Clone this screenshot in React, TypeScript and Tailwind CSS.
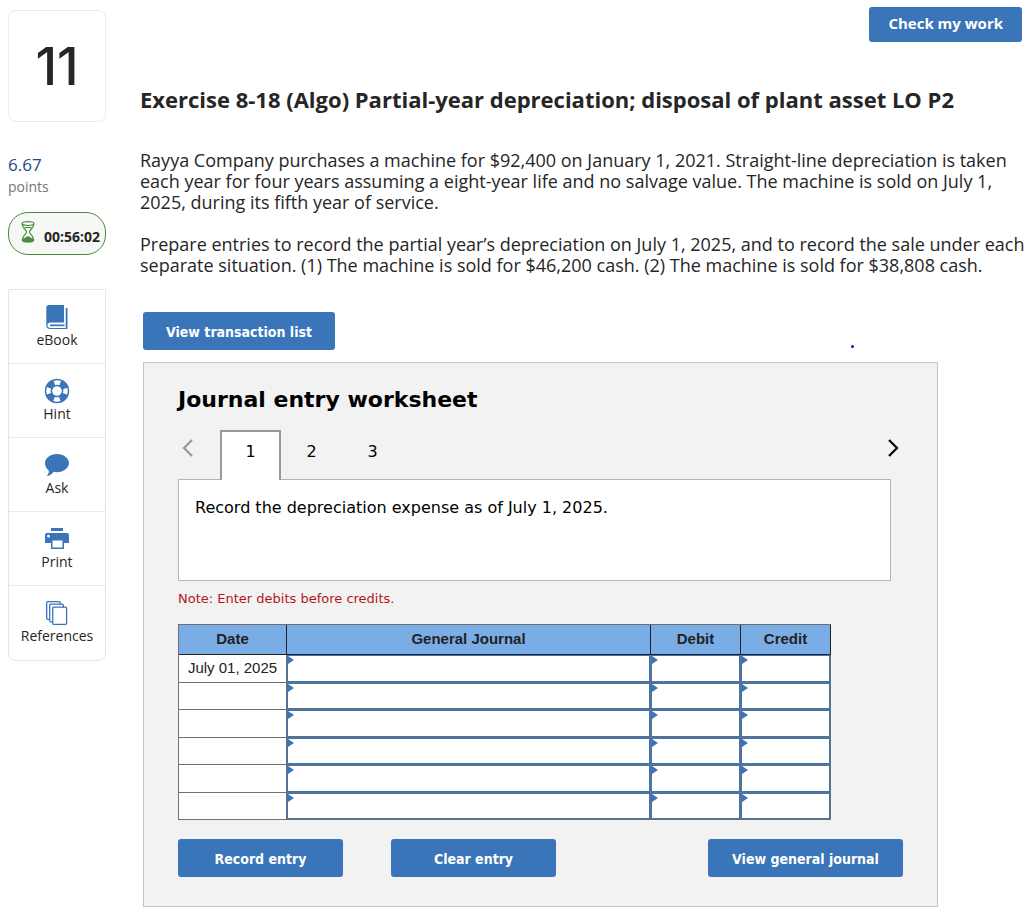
import { useState, type ReactNode } from 'react'

const TABS = ['1', '2', '3']

const ROWS = ['July 01, 2025', '', '', '', '', '']

const ENTRY_COLUMNS = ['General Journal', 'Debit', 'Credit']

const TOOLS: { label: string; icon: ReactNode }[] = [
  { label: 'eBook', icon: <BookIcon /> },
  { label: 'Hint', icon: <LifebuoyIcon /> },
  { label: 'Ask', icon: <SpeechIcon /> },
  { label: 'Print', icon: <PrinterIcon /> },
  { label: 'References', icon: <PagesIcon /> },
]

export default function App() {
  return (
    <div className="flex min-h-screen items-start gap-[34px] overflow-x-hidden bg-white pl-2 font-['Open_Sans',sans-serif] text-[#262626]">
      <Sidebar />
      <main className="min-w-0 flex-1 pt-[7px]">
        <div className="flex justify-end pr-[2px]">
          <button
            type="button"
            className="h-[35px] rounded-[3px] bg-[#3a75ba] px-[19px] pb-[2px] text-[15px] font-bold text-white"
          >
            Check my work
          </button>
        </div>

        <h1 className="mt-[42px] text-[22px] leading-[30px] font-bold whitespace-nowrap">
          Exercise 8-18 (Algo) Partial-year depreciation; disposal of plant asset LO P2
        </h1>

        <div className="mt-9 space-y-[21px] text-[18px] leading-[21px] whitespace-nowrap">
          <p>
            Rayya Company purchases a machine for $92,400 on January 1, 2021. Straight-line depreciation is taken
            <br />
            each year for four years assuming a eight-year life and no salvage value. The machine is sold on July 1,
            <br />
            2025, during its fifth year of service.
          </p>
          <p>
            Prepare entries to record the partial year’s depreciation on July 1, 2025, and to record the sale under each
            <br />
            separate situation. (1) The machine is sold for $46,200 cash. (2) The machine is sold for $38,808 cash.
          </p>
        </div>

        <div className="mt-9 ml-[3px] max-w-[795px] font-['DejaVu_Sans',Verdana,sans-serif] text-black">
          <div className="flex items-end justify-between pr-[84px]">
            <ActionButton className="w-[192px]">View transaction list</ActionButton>
            <span className="mb-[2px] size-[3px] rounded-full bg-[#3c00c8]" />
          </div>
          <Worksheet />
        </div>
      </main>
    </div>
  )
}

function Sidebar() {
  return (
    <aside className="w-[98px] shrink-0 pt-[10px]">
      <div className="flex h-28 items-center justify-center rounded-lg border border-[#ebebeb] pt-[2px] font-[Inter] text-[52px] leading-none font-medium">
        11
      </div>

      <div className="mt-8 text-[17px] leading-[22px] text-[#1c4a85]">6.67</div>
      <div className="text-[14px] leading-[22px] text-[#757575]">points</div>

      <div className="mt-[14px] flex h-[43px] items-center justify-between rounded-[20px] border border-[#4b8b3b] bg-[#f6f8f6] pr-[5px] pl-3">
        <HourglassIcon />
        <span className="pt-[6px] text-[14px] leading-5 font-bold">00:56:02</span>
      </div>

      <nav className="mt-[34px] divide-y divide-[#ebebeb] rounded-b-lg border border-[#e6e6e6]">
        {TOOLS.map((tool) => (
          <a key={tool.label} href="#" className="flex h-[74px] flex-col items-center pt-[14px]">
            {tool.icon}
            <span className="text-[14px] leading-5">{tool.label}</span>
          </a>
        ))}
      </nav>
    </aside>
  )
}

function Worksheet() {
  const [tab, setTab] = useState('1')

  return (
    <section className="mt-3 border border-[#c3c3c3] bg-[#f2f2f2] px-[34px] pt-[22px] pb-[29px]">
      <h2 className="text-[22px] leading-[30px] font-bold">Journal entry worksheet</h2>

      <div className="mt-[15px] flex items-start">
        <button type="button" aria-label="Previous entry" className="w-[42px] pt-[9px] pl-1 text-[#999]">
          <Chevron d="M10 1 2 9l8 8" />
        </button>
        {TABS.map((t) => (
          <button
            key={t}
            type="button"
            onClick={() => setTab(t)}
            className={
              t === tab
                ? 'relative -mb-px h-[50px] w-[61px] border-2 border-b-0 border-[#999] bg-white pb-2 text-[16px]'
                : 'h-[49px] w-[61px] pb-[6px] text-[16px]'
            }
          >
            {t}
          </button>
        ))}
        <button type="button" aria-label="Next entry" className="ml-auto w-[38px] pt-[9px] pl-[22px] text-black">
          <Chevron d="m2 1 8 8-8 8" />
        </button>
      </div>
      <div className="mr-[12px] h-[102px] border border-[#b5b5b5] bg-white p-4 text-[16px] leading-6">
        Record the depreciation expense as of July 1, 2025.
      </div>

      <p className="mt-2 text-[13px] leading-5 text-[#b3171d]">Note: Enter debits before credits.</p>

      <JournalTable />

      <div className="mt-[19px] flex gap-12">
        <ActionButton className="w-[165px]">Record entry</ActionButton>
        <ActionButton className="w-[165px]">Clear entry</ActionButton>
        <ActionButton className="ml-auto w-[195px]">View general journal</ActionButton>
      </div>
    </section>
  )
}

function JournalTable() {
  return (
    <table className="mt-[15px] w-[653px] table-fixed border-separate border-spacing-0 border-t border-l border-[#707070] font-['Liberation_Sans',Arial,sans-serif] text-[15px] text-[#222]">
      <colgroup>
        <col className="w-[108px]" />
        <col />
        <col className="w-[90px]" />
        <col className="w-[90px]" />
      </colgroup>
      <thead>
        <tr className="h-[30px] bg-[#7aade6]">
          {['Date', ...ENTRY_COLUMNS].map((name) => (
            <th key={name} className="border-r border-b border-[#222] p-0 font-bold">
              {name}
            </th>
          ))}
        </tr>
      </thead>
      <tbody>
        {ROWS.map((date, row) => (
          <tr key={row} className="odd:h-7 even:h-[27px]">
            <td className="border-r border-b border-[#707070] bg-white p-0 text-center">{date}</td>
            {ENTRY_COLUMNS.map((name) => (
              <EntryCell key={name} label={`${name}, row ${row + 1}`} />
            ))}
          </tr>
        ))}
      </tbody>
    </table>
  )
}

function EntryCell({ label }: { label: string }) {
  return (
    <td className="relative h-px border-r border-b border-[#707070] bg-white p-0">
      <input
        type="text"
        aria-label={label}
        className="block h-full w-full border border-[#3a75ba] bg-white px-2 outline-none"
      />
      <svg viewBox="0 0 6 8" className="pointer-events-none absolute top-[1px] left-[1px] h-2 w-[6px] fill-[#3a75ba]">
        <path d="M0 0 6 4 0 8z" />
      </svg>
    </td>
  )
}

function ActionButton({ className, children }: { className: string; children: ReactNode }) {
  return (
    <button
      type="button"
      className={`h-[38px] rounded-[3px] bg-[#3a75ba] pt-[2px] font-['DejaVu_Sans_Condensed','DejaVu_Sans',sans-serif] text-[14px] font-bold text-white ${className}`}
    >
      {children}
    </button>
  )
}

function Chevron({ d }: { d: string }) {
  return (
    <svg viewBox="0 0 12 18" className="h-[18px] w-3 fill-none stroke-current stroke-[2.2]">
      <path d={d} />
    </svg>
  )
}

function HourglassIcon() {
  return (
    <svg viewBox="0 0 14 22" className="mb-1 h-[22px] w-[14px] fill-none stroke-[#4b8b3b]" strokeWidth="1.2">
      <ellipse cx="7" cy="2.6" rx="6" ry="1.9" />
      <path d="M1.3 3.5C1.5 7.5 5.6 9 5.6 11S1.5 14.500 1.3 19M12.700 3.500C12.500 7.500 8.400 9 8.400 11s4.100 3.500 4.300 8M3.500 6.500h7" />
      <path d="M1 19c0-1.500 2.500-1.500 6-4 3.500 2.500 6 2.500 6 4 0 3-12 3-12 0z" className="fill-[#4b8b3b]" stroke="none" />
      <path d="M1.300 19c0 2.600 11.400 2.600 11.400 0" />
    </svg>
  )
}

function BookIcon() {
  return (
    <svg viewBox="0 0 24 26" className="h-[26px] w-6 fill-[#3a75ba]">
      <path d="M4 1h15v17.500H5.500c-2 0-3 1.100-3 2.700s1 2.700 3 2.700h15.200V4h1.800v21H5C2.700 25 1.300 23.500 1.300 21.200V4c0-1.800 1-3 2.700-3z" />
      <path d="M5 20.500h14.500v1.700H5z" />
    </svg>
  )
}

function LifebuoyIcon() {
  return (
    <svg viewBox="0 0 26 26" className="h-[26px] w-[26px] fill-none stroke-[#3a75ba]">
      <circle cx="13" cy="13" r="11.500" strokeWidth="1.500" />
      <circle cx="13" cy="13" r="5.600" strokeWidth="1.500" />
      <circle cx="13" cy="13" r="8.500" strokeWidth="6.500" strokeDasharray="7.400 5.950" strokeDashoffset="-2.980" />
    </svg>
  )
}

function SpeechIcon() {
  return (
    <svg viewBox="0 0 26 26" className="h-[26px] w-[26px] fill-[#3a75ba]">
      <path d="M13 2c6.600 0 12 4 12 9s-5.400 9.200-12 9.200c-1.200 0-2.300-.1-3.400-.4C7.700 22.500 5.300 24 2.600 24.200c1.600-1.300 2.400-3.200 2.200-5.700C2.400 16.800 1 14 1 11c0-5 5.400-9 12-9z" />
    </svg>
  )
}

function PrinterIcon() {
  return (
    <svg viewBox="0 0 26 26" className="h-[26px] w-[26px] fill-[#3a75ba]">
      <path d="M7 2h12v3H7z" />
      <path
        fillRule="evenodd"
        d="M3 7h20a2 2 0 0 1 2 2v8h-5v6H7v-6H1V9a2 2 0 0 1 2-2zm5.500 7.500v7h10v-7zM4.500 8.800a1.400 1.400 0 1 0 0 2.800 1.400 1.400 0 0 0 0-2.800z"
      />
    </svg>
  )
}

function PagesIcon() {
  return (
    <svg viewBox="0 0 24 26" className="h-[26px] w-6 fill-white stroke-[#3a75ba]" strokeWidth="1.300">
      <rect x="1.700" y="1.700" width="13.600" height="17.600" rx="1" />
      <rect x="4.700" y="4.200" width="13.600" height="17.600" rx="1" />
      <rect x="7.700" y="7.200" width="13.900" height="17.100" rx="1" />
    </svg>
  )
}
